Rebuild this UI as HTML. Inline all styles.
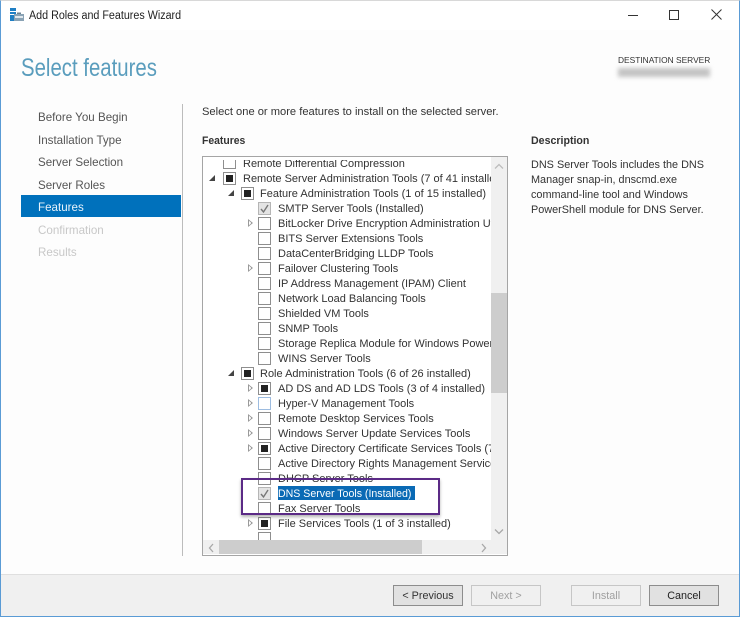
<!DOCTYPE html>
<html><head><meta charset="utf-8"><style>
html,body{margin:0;padding:0;background:#fff}
#w{position:relative;width:740px;height:617px;overflow:hidden;background:#fdfdfd;font-family:"Liberation Sans",sans-serif;font-size:11px;color:#333;filter:blur(.35px)}
.a{position:absolute;white-space:nowrap}
.nav{position:absolute;left:38px;white-space:nowrap;font-size:11.6px;color:#555;line-height:16px;margin-top:1px}
.r{position:absolute;white-space:nowrap;line-height:15px;height:15px;font-size:11px;color:#333;margin-top:1px}
.cb{position:absolute;width:11px;height:11px;border:1px solid #8e8e8e;background:#fff}
.f:after{content:"";position:absolute;left:2px;top:2px;width:7px;height:7px;background:#222}
.c{background:#e4e4e4;border-color:#b5b5b5}
.tri{position:absolute;width:5px;height:8px;background:#9a9a9a;clip-path:polygon(0 0,100% 50%,0 100%)}
.tri:after{content:"";position:absolute;left:1px;top:1.8px;width:2.4px;height:4.4px;background:#fff;clip-path:polygon(0 0,100% 50%,0 100%)}
.ex{position:absolute;width:0;height:0;border-right:6px solid #444;border-top:6px solid transparent}
.btn{position:absolute;top:585px;width:68px;height:19px;line-height:20px;text-align:center;font-size:10.8px;box-sizing:content-box}
</style></head><body><div id="w">
<div class="a" style="left:0;top:0;width:740px;height:30px;background:#fff"></div>
<svg class="a" style="left:10px;top:8px" width="15" height="14" viewBox="0 0 15 14"><rect x="0" y="0" width="6" height="3" fill="#1f7fc4"/><rect x="0" y="4" width="6" height="2" fill="#1f7fc4"/><rect x="0" y="7" width="4" height="6" fill="#1f7fc4"/><rect x="4" y="6" width="10" height="7" fill="#8aa3b5"/><rect x="5" y="8" width="8" height="2" fill="#dfe7ec"/><rect x="7" y="4.5" width="4" height="1.5" fill="#6d8494"/></svg>
<div class="a" style="left:29px;top:9px;font-size:11.5px;transform:scaleX(.933);transform-origin:0 0;line-height:15px;color:#222">Add Roles and Features Wizard</div>
<div class="a" style="left:628px;top:15px;width:10px;height:1px;background:#333"></div>
<div class="a" style="left:669px;top:10px;width:8px;height:8px;border:1px solid #333"></div>
<svg class="a" style="left:711px;top:9px" width="11" height="11"><path d="M.5.5L10.5 10.5M10.5.5L.5 10.5" stroke="#333" stroke-width="1" fill="none"/></svg>
<div class="a" style="left:21px;top:53px;font-size:25px;transform:scaleX(.815);transform-origin:0 0;line-height:30px;color:#5a9dbd">Select features</div>
<div class="a" style="left:618px;top:54px;font-size:8.4px;line-height:12px;color:#333">DESTINATION SERVER</div>
<div class="a" style="left:618px;top:68px;width:92px;height:9px;background:#c4c4c4;filter:blur(2px)"></div>
<div class="a" style="left:182px;top:104px;width:1px;height:452px;background:#bcbcbc"></div>
<div class="nav" style="top:109px">Before You Begin</div>
<div class="nav" style="top:132px">Installation Type</div>
<div class="nav" style="top:154px">Server Selection</div>
<div class="nav" style="top:177px">Server Roles</div>
<div class="a" style="left:21px;top:195px;width:160px;height:22px;background:#0071bc"></div>
<div class="nav" style="top:199px;color:#e8f2fa">Features</div>
<div class="nav" style="top:222px;color:#c8c8c8">Confirmation</div>
<div class="nav" style="top:244px;color:#c8c8c8">Results</div>
<div class="a" style="left:202px;top:105px;font-size:11.15px;line-height:15px;color:#333">Select one or more features to install on the selected server.</div>
<div class="a" style="left:202px;top:134px;font-size:11px;transform:scaleX(.945);transform-origin:0 0;line-height:15px;font-weight:bold;color:#333">Features</div>
<div class="a" style="left:531px;top:134px;font-size:11px;transform:scaleX(.965);transform-origin:0 0;line-height:15px;font-weight:bold;color:#333">Description</div>
<div class="a" style="left:531px;top:158px;font-size:10.86px;line-height:15px;color:#333">DNS Server Tools includes the DNS<br>Manager snap-in, dnscmd.exe<br>command-line tool and Windows<br>PowerShell module for DNS Server.</div>

<div class="a" style="left:202px;top:156px;width:304px;height:398px;border:1px solid #a5a5a5;background:#fff"></div>
<div class="a" id="list" style="left:203px;top:160px;width:288px;height:380px;overflow:hidden">
<div style="position:absolute;left:0;top:-3px;width:288px;height:383px">
<div class="cb" style="left:20px;top:-1px"></div><div class="r" style="left:40px;top:-1px">Remote Differential Compression</div>
<div class="ex" style="left:6px;top:18px"></div><div class="cb f" style="left:20px;top:15px"></div><div class="r" style="left:40px;top:14px">Remote Server Administration Tools (7 of 41 installed)</div>
<div class="ex" style="left:25px;top:33px"></div><div class="cb f" style="left:38px;top:30px"></div><div class="r" style="left:57px;top:29px">Feature Administration Tools (1 of 15 installed)</div>
<div class="cb c" style="left:55px;top:45px"></div><svg class="a" style="left:57px;top:47px" width="10" height="10"><path d="M1 5L3.5 8L8 1" stroke="#777" stroke-width="1.4" fill="none"/></svg><div class="r" style="left:75px;top:44px">SMTP Server Tools (Installed)</div>
<div class="tri" style="left:45px;top:62px"></div><div class="cb" style="left:55px;top:60px"></div><div class="r" style="left:75px;top:59px">BitLocker Drive Encryption Administration Utilities</div>
<div class="cb" style="left:55px;top:75px"></div><div class="r" style="left:75px;top:74px">BITS Server Extensions Tools</div>
<div class="cb" style="left:55px;top:90px"></div><div class="r" style="left:75px;top:89px">DataCenterBridging LLDP Tools</div>
<div class="tri" style="left:45px;top:107px"></div><div class="cb" style="left:55px;top:105px"></div><div class="r" style="left:75px;top:104px">Failover Clustering Tools</div>
<div class="cb" style="left:55px;top:120px"></div><div class="r" style="left:75px;top:119px">IP Address Management (IPAM) Client</div>
<div class="cb" style="left:55px;top:135px"></div><div class="r" style="left:75px;top:134px">Network Load Balancing Tools</div>
<div class="cb" style="left:55px;top:150px"></div><div class="r" style="left:75px;top:149px">Shielded VM Tools</div>
<div class="cb" style="left:55px;top:165px"></div><div class="r" style="left:75px;top:164px">SNMP Tools</div>
<div class="cb" style="left:55px;top:180px"></div><div class="r" style="left:75px;top:179px">Storage Replica Module for Windows PowerShell</div>
<div class="cb" style="left:55px;top:195px"></div><div class="r" style="left:75px;top:194px">WINS Server Tools</div>
<div class="ex" style="left:25px;top:213px"></div><div class="cb f" style="left:38px;top:210px"></div><div class="r" style="left:57px;top:209px">Role Administration Tools (6 of 26 installed)</div>
<div class="tri" style="left:45px;top:227px"></div><div class="cb f" style="left:55px;top:225px"></div><div class="r" style="left:75px;top:224px">AD DS and AD LDS Tools (3 of 4 installed)</div>
<div class="tri" style="left:45px;top:242px"></div><div class="cb" style="left:55px;top:240px;border-color:#9dbce0"></div><div class="r" style="left:75px;top:239px">Hyper-V Management Tools</div>
<div class="tri" style="left:45px;top:257px"></div><div class="cb" style="left:55px;top:255px"></div><div class="r" style="left:75px;top:254px">Remote Desktop Services Tools</div>
<div class="tri" style="left:45px;top:272px"></div><div class="cb" style="left:55px;top:270px"></div><div class="r" style="left:75px;top:269px">Windows Server Update Services Tools</div>
<div class="tri" style="left:45px;top:287px"></div><div class="cb f" style="left:55px;top:285px"></div><div class="r" style="left:75px;top:284px">Active Directory Certificate Services Tools (7 of 8)</div>
<div class="cb" style="left:55px;top:300px"></div><div class="r" style="left:75px;top:299px">Active Directory Rights Management Services Tools</div>
<div class="cb" style="left:55px;top:315px"></div><div class="r" style="left:75px;top:314px">DHCP Server Tools</div>
<div class="cb c" style="left:55px;top:330px"></div><svg class="a" style="left:57px;top:332px" width="10" height="10"><path d="M1 5L3.5 8L8 1" stroke="#777" stroke-width="1.4" fill="none"/></svg><div class="a" style="left:75px;top:329px;width:137px;height:14px;background:#0a6ab5"></div><div class="r" style="left:75px;top:329px;color:#fff;font-size:10.6px">DNS Server Tools (Installed)</div>
<div class="cb" style="left:55px;top:345px"></div><div class="r" style="left:75px;top:344px">Fax Server Tools</div>
<div class="tri" style="left:45px;top:362px"></div><div class="cb f" style="left:55px;top:360px"></div><div class="r" style="left:75px;top:359px">File Services Tools (1 of 3 installed)</div>
<div class="cb" style="left:55px;top:375px"></div>
</div></div>
<!-- scrollbars -->
<div class="a" style="left:491px;top:157px;width:16px;height:383px;background:#f0f0f0"></div>
<div class="a" style="left:491px;top:293px;width:16px;height:100px;background:#cdcdcd"></div>
<svg class="a" style="left:494px;top:163px" width="10" height="7"><path d="M1 5.5L5 1.5L9 5.5" stroke="#bdbdbd" stroke-width="1.3" fill="none"/></svg>
<svg class="a" style="left:494px;top:528px" width="10" height="7"><path d="M1 1.5L5 5.5L9 1.5" stroke="#a8a8a8" stroke-width="1.3" fill="none"/></svg>
<div class="a" style="left:203px;top:540px;width:304px;height:14px;background:#f0f0f0"></div>
<div class="a" style="left:219px;top:540px;width:203px;height:14px;background:#cdcdcd"></div>
<svg class="a" style="left:208px;top:543px" width="7" height="10"><path d="M5 1L1.5 5L5 9" stroke="#a8a8a8" stroke-width="1.3" fill="none"/></svg>
<svg class="a" style="left:480px;top:543px" width="7" height="10"><path d="M2 1L5.5 5L2 9" stroke="#a8a8a8" stroke-width="1.3" fill="none"/></svg>
<!-- highlight -->
<div class="a" style="left:241px;top:478px;width:195px;height:33px;border:2px solid #5b2a86;box-shadow:0 2px 3px rgba(0,0,0,.3)"></div>
<!-- footer -->
<div class="a" style="left:0;top:574px;width:740px;height:43px;background:#f0f0f0;border-top:1px solid #dfdfdf;box-sizing:border-box"></div>
<div class="btn" style="left:393px;background:#e1e1e1;border:1px solid #8d8d8d;color:#333">&lt; Previous</div>
<div class="btn" style="left:471px;background:#f0f0f0;border:1px solid #c6c6c6;color:#a0a0a0">Next &gt;</div>
<div class="btn" style="left:571px;background:#f0f0f0;border:1px solid #c6c6c6;color:#a0a0a0">Install</div>
<div class="btn" style="left:649px;background:#e1e1e1;border:1px solid #8d8d8d;color:#222">Cancel</div>
<!-- window border -->
<div class="a" style="left:0;top:0;width:740px;height:617px;box-sizing:border-box;border:1px solid #5a9bd5;border-top:1px solid #d8d8d8"></div>
</div></body></html>
